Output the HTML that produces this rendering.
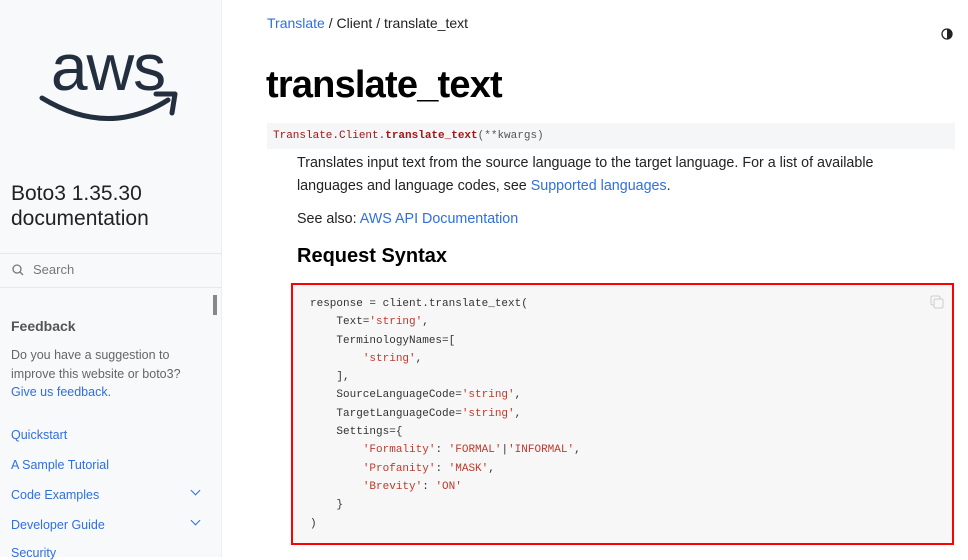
<!DOCTYPE html>
<html><head><meta charset="utf-8"><style>
*{margin:0;padding:0;box-sizing:border-box}
body{width:968px;height:557px;overflow:hidden;background:#fff;font-family:"Liberation Sans",sans-serif;color:#222;position:relative}
.side{position:absolute;left:0;top:0;width:222px;height:557px;background:#f8f9fb;border-right:1px solid #eceef2}
.side .t{position:absolute;left:11px;top:181px;font-size:21px;line-height:25px;color:#222}
.sline{position:absolute;left:0;width:222px;height:1px;background:#e6e8ec}
.srch{position:absolute;left:11px;top:262px;font-size:13px;color:#777}
.fb{position:absolute;left:11px;top:318px;font-size:14px;font-weight:bold;color:#555}
.fbt{position:absolute;left:11px;top:346px;font-size:12.5px;line-height:18.5px;color:#666;width:185px}
a,.lk{color:#2f6fe0;text-decoration:none}
.nav{position:absolute;left:11px;font-size:12.5px;color:#2f6fe0}
.chev{position:absolute;left:192px;width:7px;height:7px;border-right:1.5px solid #2f6fe0;border-bottom:1.5px solid #2f6fe0;transform:rotate(45deg)}
.bc{position:absolute;left:267px;top:15px;font-size:14px;color:#222}
h1{position:absolute;left:266px;top:64px;font-size:38px;font-weight:bold;color:#000;letter-spacing:-0.8px}
.sig{position:absolute;left:267px;top:123px;width:688px;height:26px;background:#f5f6f8;font-family:"Liberation Mono",monospace;font-size:11px;line-height:26px;padding-left:6px;color:#555}
.sig .r{color:#a31515}
.p{position:absolute;left:297px;font-size:14.3px;line-height:23px;color:#222}
h2{position:absolute;left:297px;top:245px;font-size:20px;font-weight:bold;color:#000}
.code{position:absolute;left:291px;top:283px;width:663px;height:262px;border:2px solid #f00;background:#f7f7f7}
pre{position:absolute;left:17px;top:10px;font-family:"Liberation Mono",monospace;font-size:11px;line-height:18.3px;color:#333}
.s{color:#c0392b}
</style></head><body>
<div class="side">
<svg style="position:absolute;left:38px;top:36px" width="145" height="95" viewBox="0 0 145 95">
<text x="70" y="54" text-anchor="middle" font-family="Liberation Sans,sans-serif" font-size="66" fill="#232f3e" letter-spacing="-1">aws</text>
<path d="M4 62 Q70 102 130 64" stroke="#232f3e" stroke-width="5" fill="none" stroke-linecap="round"/>
<path d="M118 58 L137 58 L134 77" stroke="#232f3e" stroke-width="5" fill="none" stroke-linecap="round" stroke-linejoin="round"/>
</svg>
<div class="t">Boto3 1.35.30<br>documentation</div>
<div class="sline" style="top:253px"></div>
<div class="sline" style="top:287px"></div>
<svg style="position:absolute;left:12px;top:264px" width="12" height="12"><circle cx="5" cy="5" r="4" stroke="#777" fill="none" stroke-width="1.3"/><path d="M8 8 L11 11" stroke="#777" stroke-width="1.3"/></svg>
<div class="srch" style="left:33px">Search</div>
<div style="position:absolute;left:213px;top:295px;width:4px;height:20px;background:#888"></div>
<div class="fb">Feedback</div>
<div class="fbt">Do you have a suggestion to improve this website or boto3? <span class="lk">Give us feedback</span>.</div>
<div class="nav" style="top:428px">Quickstart</div>
<div class="nav" style="top:458px">A Sample Tutorial</div>
<div class="nav" style="top:488px">Code Examples</div><div class="chev" style="top:487px"></div>
<div class="nav" style="top:518px">Developer Guide</div><div class="chev" style="top:517px"></div>
<div class="nav" style="top:546px">Security</div>
</div>
<div class="bc"><span class="lk">Translate</span> / Client / translate_text</div>
<svg style="position:absolute;left:941px;top:28px" width="12" height="12"><circle cx="6" cy="6" r="5" stroke="#222" fill="none" stroke-width="1.3"/><path d="M6 1 A5 5 0 0 1 6 11 Z" fill="#222"/></svg>
<h1>translate_text</h1>
<div class="sig"><span class="r">Translate.Client.<b>translate_text</b></span>(**kwargs)</div>
<div class="p" style="top:152px">Translates input text from the source language to the target language. For a list of available<br>languages and language codes, see <span class="lk">Supported languages</span>.</div>
<div class="p" style="top:208px">See also: <span class="lk">AWS API Documentation</span></div>
<h2>Request Syntax</h2>
<div class="code">
<svg style="position:absolute;right:8px;top:10px" width="14" height="14"><rect x="1" y="1" width="9" height="9" rx="1.5" stroke="#ccc" fill="none"/><rect x="4" y="4" width="9" height="9" rx="1.5" stroke="#ccc" fill="#f7f7f7"/></svg>
<pre>response = client.translate_text(
    Text=<span class="s">'string'</span>,
    TerminologyNames=[
        <span class="s">'string'</span>,
    ],
    SourceLanguageCode=<span class="s">'string'</span>,
    TargetLanguageCode=<span class="s">'string'</span>,
    Settings={
        <span class="s">'Formality'</span>: <span class="s">'FORMAL'</span>|<span class="s">'INFORMAL'</span>,
        <span class="s">'Profanity'</span>: <span class="s">'MASK'</span>,
        <span class="s">'Brevity'</span>: <span class="s">'ON'</span>
    }
)</pre>
</div>
</body></html>
